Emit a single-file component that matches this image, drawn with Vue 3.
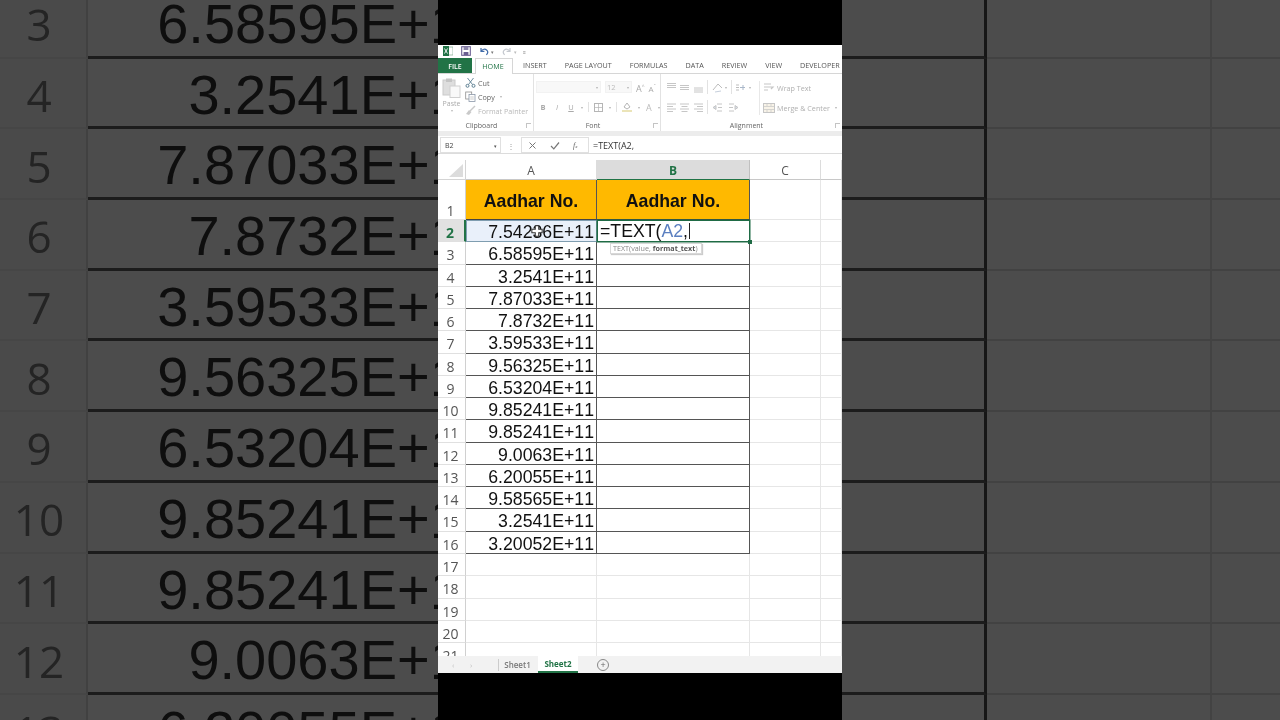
<script setup>
const bgRows = [
  ['3', '6.58595E+11'], ['4', '3.2541E+11'], ['5', '7.87033E+11'], ['6', '7.8732E+11'],
  ['7', '3.59533E+11'], ['8', '9.56325E+11'], ['9', '6.53204E+11'], ['10', '9.85241E+11'],
  ['11', '9.85241E+11'], ['12', '9.0063E+11'], ['13', '6.20055E+11']
]
const rightRows = Array.from({ length: 11 }, (_, i) => i)
const rows = [
  [3, '6.58595E+11'], [4, '3.2541E+11'], [5, '7.87033E+11'], [6, '7.8732E+11'], [7, '3.59533E+11'],
  [8, '9.56325E+11'], [9, '6.53204E+11'], [10, '9.85241E+11'], [11, '9.85241E+11'], [12, '9.0063E+11'],
  [13, '6.20055E+11'], [14, '9.58565E+11'], [15, '3.2541E+11'], [16, '3.20052E+11']
]
const empties = [17, 18, 19, 20, 21]
const tabs = ['INSERT', 'PAGE LAYOUT', 'FORMULAS', 'DATA', 'REVIEW', 'VIEW', 'DEVELOPER']
</script>

<template>
  <div class="screen">
    <div class="side left">
      <div class="bg-rows">
        <div v-for="r in bgRows" :key="r[0]" class="bg-row">
          <div class="bg-num">{{ r[0] }}</div>
          <div class="bg-val">{{ r[1] }}</div>
        </div>
      </div>
    </div>

    <div class="center">
      <div class="bar-black top"></div>
      <div class="app">
        <div class="titlebar">
          <svg class="t-ico" width="10" height="10" viewBox="0 0 10 10"><rect x="3" y="1" width="7" height="8" fill="#fff" stroke="#7fa98f" stroke-width=".7"/><rect x="0" y="0" width="6" height="10" fill="#217346"/><path d="M1.5 2.5l3 5M4.5 2.5l-3 5" stroke="#fff" stroke-width=".9"/></svg>
          <svg class="t-ico s" width="10" height="10" viewBox="0 0 10 10"><rect x=".7" y=".7" width="8.6" height="8.6" fill="none" stroke="#6a5f92" stroke-width="1.1"/><rect x="2.6" y="1" width="4.8" height="3" fill="#8a84a8"/><rect x="2.6" y="6" width="4.8" height="3.2" fill="#6a5f92"/></svg>
          <svg class="t-ico u" width="10" height="10" viewBox="0 0 10 10"><path d="M2 2v3.4h3.4M2.3 5.2C3.5 3 6 2.600 7.800 4.200 9.200 5.600 8.600 7.600 7.400 8.800" fill="none" stroke="#3f6aa8" stroke-width="1.200"/></svg>
          <span class="t-dd">▾</span>
          <svg class="t-ico r" width="10" height="10" viewBox="0 0 10 10"><path d="M8 2v3.400H4.600M7.700 5.200C6.500 3 4 2.600 2.200 4.200 .8 5.600 1.400 7.600 2.600 8.800" fill="none" stroke="#c5c9cf" stroke-width="1.200"/></svg>
          <span class="t-dd faint">▾</span>
          <span class="t-dd last">≡</span>
        </div>

        <div class="tabs">
          <div class="tab-file">FILE</div>
          <div class="tab-home">HOME</div>
          <div class="tab-list">
            <span v-for="t in tabs" :key="t" class="tab">{{ t }}</span>
          </div>
        </div>

        <div class="ribbon">
          <div class="group clip">
            <div class="group-body clip-body">
              <div class="paste">
                <svg width="19" height="20" viewBox="0 0 19 20"><rect x="1" y="2" width="12" height="15" fill="#dedede" stroke="#cacaca"/><rect x="4" y=".5" width="6" height="3.500" fill="#c4c4c4"/><rect x="8" y="8" width="10" height="11.500" fill="#f9f9f9" stroke="#d0d0d0"/></svg>
                <span class="paste-l">Paste</span>
                <span class="paste-d">▾</span>
              </div>
              <div class="clip-items">
                <div class="clip-item dark">
                  <svg width="11" height="11" viewBox="0 0 11 11"><path d="M2.500 1l5 6.500M8.500 1l-5 6.500" stroke="#5c7f92" stroke-width=".9"/><circle cx="2.500" cy="8.800" r="1.500" fill="none" stroke="#5c7f92"/><circle cx="8.500" cy="8.800" r="1.500" fill="none" stroke="#5c7f92"/></svg>
                  <span>Cut</span>
                </div>
                <div class="clip-item dark">
                  <svg width="11" height="11" viewBox="0 0 11 11"><rect x=".7" y="1" width="6" height="7" fill="#fff" stroke="#8f8f8f" stroke-width=".8"/><rect x="4" y="3.500" width="6" height="7" fill="#fff" stroke="#8a97a8" stroke-width=".8"/><path d="M5.200 6h3.600M5.200 8h3.600" stroke="#aaa" stroke-width=".6"/></svg>
                  <span>Copy</span>
                  <span class="mini">▾</span>
                </div>
                <div class="clip-item">
                  <svg width="11" height="11" viewBox="0 0 11 11"><path d="M10 1L5 6" stroke="#c9c9c9" stroke-width="1.500"/><path d="M1 9l3-4 2.500 2L4 10z" fill="#c9c9c9"/></svg>
                  <span>Format Painter</span>
                </div>
              </div>
            </div>
            <div class="group-label pad">Clipboard<i class="launch"></i></div>
          </div>

          <div class="group font">
            <div class="group-body font-body">
              <div class="font-row">
                <div class="fbox name"><span class="mini">▾</span></div>
                <div class="fbox size"><span>12</span><span class="mini">▾</span></div>
                <span class="ga big">A<sup>^</sup></span>
                <span class="ga small">A<sup>ˇ</sup></span>
              </div>
              <div class="font-row r2">
                <b class="fb">B</b><i class="fb">I</i><u class="fb">U</u><span class="mini">▾</span>
                <i class="vsep"></i>
                <svg width="9" height="9" viewBox="0 0 9 9"><rect x=".5" y=".5" width="8" height="8" fill="none" stroke="#b5b5b5"/><path d="M4.500 0v9M0 4.500h9" stroke="#b5b5b5" stroke-width=".7"/></svg>
                <span class="mini">▾</span>
                <i class="vsep"></i>
                <svg width="10" height="10" viewBox="0 0 10 10"><path d="M2 5l3-4 3 4-3 2z" fill="none" stroke="#b5b5b5"/><rect y="8" width="10" height="2" fill="#ebe4b8"/></svg>
                <span class="mini">▾</span>
                <span class="fa">A</span>
                <span class="mini">▾</span>
              </div>
            </div>
            <div class="group-label pad">Font<i class="launch"></i></div>
          </div>

          <div class="group align">
            <div class="group-body align-body">
              <div class="align-left">
                <div class="a-row">
                  <svg width="11" height="11" viewBox="0 0 11 11"><path d="M1 1.500h9M1 3.500h9M1 5.500h9" stroke="#c6c6c6"/></svg>
                  <svg width="11" height="11" viewBox="0 0 11 11"><path d="M1 3.500h9M1 5.500h9M1 7.500h9" stroke="#c6c6c6"/></svg>
                  <svg width="11" height="11" viewBox="0 0 11 11"><path d="M1 6h9M1 8h9M1 10h9" stroke="#c6c6c6"/></svg>
                  <i class="vsep tall"></i>
                  <svg width="11" height="11" viewBox="0 0 11 11"><path d="M1 8l5-6 4 4" fill="none" stroke="#bdbdbd"/><path d="M3 10l6-1" stroke="#c6cfdc"/></svg>
                  <span class="mini tight">▾</span>
                  <i class="vsep tall"></i>
                  <svg width="11" height="11" viewBox="0 0 11 11"><path d="M1 3h3M1 5.500h3M1 8h3" stroke="#bdbdbd"/><path d="M5 5.500h5M8 3v5" stroke="#a9b7c9"/></svg>
                  <span class="mini tight">▾</span>
                </div>
                <div class="a-row">
                  <svg width="11" height="11" viewBox="0 0 11 11"><path d="M1 2h9M1 4.500h6M1 7h9M1 9.500h6" stroke="#c6c6c6"/></svg>
                  <svg width="11" height="11" viewBox="0 0 11 11"><path d="M1 2h9M2.500 4.500h6M1 7h9M2.500 9.500h6" stroke="#c6c6c6"/></svg>
                  <svg width="11" height="11" viewBox="0 0 11 11"><path d="M1 2h9M4 4.500h6M1 7h9M4 9.500h6" stroke="#c6c6c6"/></svg>
                  <i class="vsep tall"></i>
                  <svg width="11" height="11" viewBox="0 0 11 11"><path d="M5 2h5M5 9h5M6 5.500h4M1 5.500l3-2v4z" stroke="#c6c6c6" fill="#d6dde6"/></svg>
                  <svg class="wide" width="11" height="11" viewBox="0 0 11 11"><path d="M1 2h5M1 9h5M1 5.500h4M10 5.500l-3-2v4z" stroke="#c6c6c6" fill="#d6dde6"/></svg>
                </div>
              </div>
              <div class="align-right">
                <div class="wrap">
                  <svg width="12" height="12" viewBox="0 0 12 12"><path d="M1 2h7M1 5h9l-2 2M1 8h4" fill="none" stroke="#c6c6c6" stroke-width="1.200"/></svg>
                  <span>Wrap Text</span>
                </div>
                <div class="wrap">
                  <svg width="12" height="12" viewBox="0 0 12 12"><rect x=".5" y="1.500" width="11" height="9" fill="#f8f3e8" stroke="#c6c6c6"/><path d="M0 4.500h12M0 7.500h12M4 1v3M8 1v3M4 8v3M8 8v3" stroke="#c6c6c6" stroke-width=".7"/></svg>
                  <span>Merge &amp; Center</span>
                  <span class="mini">▾</span>
                </div>
              </div>
            </div>
            <div class="group-label pad-lg">Alignment<i class="launch"></i></div>
          </div>
        </div>

        <div class="formula">
          <div class="namebox"><span>B2</span><span class="mini dark-m">▾</span></div>
          <span class="dots">⋮</span>
          <div class="fx-box">
            <svg width="9" height="9" viewBox="0 0 9 9"><path d="M1.500 1.500l6 6M7.500 1.500l-6 6" stroke="#777" stroke-width="1"/></svg>
            <svg width="10" height="9" viewBox="0 0 10 9"><path d="M1 5l2.800 2.800L9 1.500" fill="none" stroke="#777" stroke-width="1.200"/></svg>
            <span class="fx"><i>f</i><small>x</small></span>
          </div>
          <div class="f-input">=TEXT(A2,</div>
        </div>

        <div class="sheet">
          <div class="grid-row col-head">
            <div class="corner"><i></i></div>
            <div class="ch">A</div>
            <div class="ch sel">B</div>
            <div class="ch">C</div>
            <div class="ch"></div>
          </div>
          <div class="grid-row first">
            <div class="rh bottom">1</div>
            <div class="cell head">Aadhar No.</div>
            <div class="cell head">Aadhar No.</div>
            <div class="cell"></div>
            <div class="cell"></div>
          </div>
          <div class="grid-row data">
            <div class="rh selected">2</div>
            <div class="cell t a2">7.54236E+11</div>
            <div class="cell t b2">=TEXT(<span class="ref">A2</span>,<i class="caret"></i></div>
            <div class="cell"></div>
            <div class="cell"></div>
          </div>
          <div v-for="r in rows" :key="r[0]" class="grid-row data">
            <div class="rh">{{ r[0] }}</div>
            <div class="cell t a">{{ r[1] }}</div>
            <div class="cell t b"></div>
            <div class="cell"></div>
            <div class="cell"></div>
          </div>
          <div v-for="e in empties" :key="e" class="grid-row data">
            <div class="rh">{{ e }}</div>
            <div class="cell"></div>
            <div class="cell"></div>
            <div class="cell"></div>
            <div class="cell"></div>
          </div>

          <div class="tip">TEXT(value, <b>format_text</b>)</div>
          <svg class="cursor" width="12" height="12" viewBox="0 0 14 14"><path d="M5 1h4v4h4v4H9v4H5V9H1V5h4z" fill="#fff" stroke="#333" stroke-width="1.200"/></svg>
        </div>

        <div class="sheetbar">
          <span class="arrow">‹</span>
          <span class="arrow">›</span>
          <i class="vsep sb"></i>
          <span class="s-tab first-tab">Sheet1</span>
          <span class="s-tab on">Sheet2</span>
          <span class="plus">+</span>
        </div>
      </div>
      <div class="bar-black bottom"></div>
    </div>

    <div class="side right">
      <div class="bg-rows">
        <div v-for="r in rightRows" :key="r" class="r-row">
          <div class="r-a"></div>
          <div class="r-b"></div>
          <div class="r-c"></div>
        </div>
      </div>
    </div>
  </div>
</template>

<style>
html, body { margin: 0; background: #000; }
</style>

<style scoped>
* { box-sizing: border-box; }
.screen {
  width: 1280px; height: 720px; display: flex; overflow: hidden;
  font-family: "Liberation Sans", Arial, sans-serif; background: #000;
}
.side { width: 438px; height: 720px; overflow: hidden; background: #4c4c4c; flex: none; }
.bg-rows { margin-top: -12px; filter: blur(.7px); }
.bg-row { height: 70.7px; display: flex; }
.bg-num {
  width: 88px; flex: none; background: #4a4a4a; border-right: 2px solid #414141;
  color: #242424; font: 44px "Open Sans", sans-serif; display: flex; align-items: center;
  justify-content: center; padding: 4px 8px 0 0; border-bottom: 2px solid #464646;
}
.bg-val {
  flex: none; width: 406px; text-align: right; font-size: 56px; line-height: 72px; color: #0e0e0e;
  border-bottom: 3px solid #1c1c1c; padding-right: 2px; white-space: nowrap; font-kerning: none;
}
.r-row { height: 70.7px; display: flex; }
.r-a { width: 145px; flex: none; border-bottom: 3px solid #1c1c1c; border-right: 3px solid #161616; }
.r-b { width: 225px; flex: none; border-bottom: 2px solid #424242; border-right: 2px solid #434343; }
.r-c { flex: 1; border-bottom: 2px solid #424242; }

.center { width: 404px; flex: none; display: flex; flex-direction: column; }
.bar-black.top { height: 45px; background: #000; flex: none; }
.bar-black.bottom { height: 47px; background: #000; flex: none; }
.app {
  height: 628px; flex: none; background: #fff; display: flex; flex-direction: column; overflow: hidden;
  font-family: "Open Sans", sans-serif; color: #666; filter: blur(.25px);
}

.titlebar { height: 13px; display: flex; align-items: center; flex: none; padding-left: 5px; position: relative; }
.t-ico { flex: none; margin-top: -2px; }
.t-ico.s { margin-left: 8px; }
.t-ico.u { margin-left: 8px; }
.t-ico.r { margin-left: 8px; }
.t-dd { font-size: 5px; color: #777; margin-left: 2px; }
.t-dd.faint { color: #bbb; }
.t-dd.last { margin-left: 6px; color: #888; }

.tabs { height: 15px; display: flex; flex: none; position: relative; }
.tab-file {
  width: 34px; background: #217346; color: #fff; font-size: 7px; font-weight: 600; padding-top: 1px;
  display: flex; align-items: center; justify-content: center;
}
.tab-home {
  width: 38px; margin-left: 3px; border: 1px solid #d6d6d6; border-bottom: none; background: #fff;
  color: #217346; font-size: 7.2px; display: flex; align-items: center; justify-content: center;
  position: relative; z-index: 1; height: 16px; padding: 0 2px 1px 0;
}
.tab-list { display: flex; gap: 18px; padding: 0 0 1px 10px; align-items: center; white-space: nowrap; }
.tab { font-size: 7.2px; color: #555; }

.ribbon {
  height: 58px; flex: none; border-top: 1px solid #d6d6d6; display: flex; background: #fff; position: relative;
}
.group { border-right: 1px solid #e2e2e2; display: flex; flex-direction: column; flex: none; }
.group.clip { width: 96px; }
.group.font { width: 127px; }
.group.align { width: 181px; border-right: none; }
.group-body { flex: 1; min-height: 0; }
.group-label {
  height: 11px; flex: none; font-size: 7px; color: #666; text-align: center; line-height: 12px; position: relative;
}
.group-label.pad { padding-right: 8px; }
.group-label.pad-lg { padding-right: 10px; }
.launch {
  position: absolute; right: 2px; top: 3px; width: 5px; height: 5px;
  border-left: 1px solid #c4c4c4; border-top: 1px solid #c4c4c4;
}
.clip-body { display: flex; }
.paste { width: 27px; display: flex; flex-direction: column; align-items: center; padding-top: 4px; flex: none; }
.paste-l { font-size: 7px; color: #aaa; line-height: 9px; margin-top: 1px; }
.paste-d { font-size: 4px; color: #bbb; line-height: 6px; }
.clip-items { display: flex; flex-direction: column; padding-top: 3px; gap: 3px; }
.clip-item { display: flex; align-items: center; gap: 2px; height: 11px; font-size: 7.2px; color: #b8b8b8; white-space: nowrap; }
.clip-item.dark { color: #666; }
.mini { font-size: 4px; color: #b5b5b5; margin-left: 3px; }
.mini.tight { margin-left: 0; }
.font-body { padding: 7px 0 0 2px; display: flex; flex-direction: column; gap: 8px; }
.font-row { display: flex; align-items: center; gap: 4px; height: 12px; }
.font-row.r2 { gap: 3px; color: #aaa; }
.fbox {
  height: 12px; background: #f8f8f8; border: 1px solid #f2f2f2; display: flex; align-items: center;
  justify-content: flex-end; font-size: 7.5px; color: #bbb; padding-right: 2px;
}
.fbox.name { width: 65px; }
.fbox.size { width: 27px; justify-content: space-between; padding-left: 1px; }
.ga { font-size: 9px; color: #aaa; line-height: 12px; }
.ga sup { font-size: 5px; }
.ga.small { font-size: 8px; }
.fb { font-size: 7.5px; width: 14px; text-align: center; color: #aaa; font-style: normal; margin-right: -3px; }
i.fb { font-style: italic; }
.vsep { display: block; width: 1px; height: 10px; background: #e2e2e2; margin: 0 2px; flex: none; }
.vsep.tall { height: 14px; margin: 0 1px; }
.fa { font-size: 9px; color: #bbb; margin-left: 3px; }
.align-body { display: flex; padding: 7px 0 0 4.5px; }
.align-left { width: 94.5px; flex: none; display: flex; flex-direction: column; gap: 8px; border-right: 1px solid #e8e8e8; margin-bottom: 5px; }
.a-row { display: flex; gap: 2.5px; align-items: center; height: 12px; }
.a-row .wide { margin-left: 3px; }
.align-right { padding-left: 3px; display: flex; flex-direction: column; gap: 7px; }
.wrap { display: flex; align-items: center; gap: 2px; font-size: 7.2px; color: #b0b0b0; white-space: nowrap; height: 13px; }

.formula {
  height: 23px; flex: none; display: flex; align-items: center; padding: 1px 0 0 2px; background: #fff;
  border-top: 5px solid #ececec; border-bottom: 1px solid #dcdcdc;
}
.namebox {
  width: 61px; height: 100%; border: 1px solid #e0e0e0; display: flex; justify-content: space-between;
  align-items: center; padding: 1px 3px 0 4px; font-size: 7px; color: #444; flex: none;
}
.dark-m { color: #555; font-size: 5px; }
.dots { width: 20px; text-align: center; font-size: 8px; color: #999; flex: none; }
.fx-box {
  width: 68px; height: 100%; border: 1px solid #e0e0e0; display: flex; align-items: center; gap: 13px; padding-left: 6px; flex: none;
}
.fx { font: italic 8px "Liberation Serif", serif; color: #666; }
.fx small { font-size: 5px; }
.f-input { flex: 1; height: 100%; padding-left: 4px; font-size: 9px; color: #333; line-height: 17px; }

.sheet { flex: none; height: 502px; position: relative; overflow: hidden; padding-top: 6px; }
.grid-row { display: grid; grid-template-columns: 28px 131px 153px 71px 21px; grid-template-rows: minmax(0, 1fr); }
.col-head { height: 20px; }
.first { height: 40px; }
.data { height: 22.27px; }
.corner { background: #fff; border-bottom: 1px solid #d4d4d4; border-right: 1px solid #d4d4d4; position: relative; }
.corner i {
  position: absolute; right: 2px; bottom: 2px; width: 0; height: 0;
  border-left: 14px solid transparent; border-bottom: 13px solid #dcdcdc;
}
.ch {
  border-right: 1px solid #dcdcdc; border-bottom: 1px solid #c8c8c8; text-align: center;
  font-size: 12px; line-height: 21px; color: #555; background: #fff; font-family: "Open Sans", sans-serif;
}
.ch.sel { background: #dcdcdc; color: #217346; font-weight: 700; border-bottom: 1px solid #217346; border-right: 1px solid #c0c0c0; }
.rh {
  border-right: 1px solid #d0d0d0; border-bottom: 1px solid #e0e0e0; text-align: center; font-size: 14px;
  color: #555; line-height: 26px; padding-right: 2px; overflow: hidden;
}
.rh.bottom { line-height: 22px; padding-top: 20px; }
.rh.selected { background: #e1e1e1; color: #217346; font-weight: 700; border-right: 2px solid #217346; }
.cell { border-right: 1px solid #e6e6e6; border-bottom: 1px solid #e6e6e6; font-family: "Liberation Sans", Arial, sans-serif; min-width: 0; }
.head {
  background: #ffb900; border-right: 1px solid #555; border-bottom: 1px solid #444; color: #111; font-weight: 700; font-size: 17.7px;
  display: flex; align-items: center; justify-content: center; font-kerning: none; padding-top: 3px;
}
.t { color: #111; font-size: 17.7px; line-height: 24px; white-space: nowrap; font-kerning: none; }
.a, .a2 { text-align: right; padding-right: 2px; }
.a, .b { border-right: 1px solid #555; border-bottom: 1px solid #555; }
.a2 { background: #e9f0fa; border: 1px solid #7f9db0; border-right: 1px solid #7fa0b0; line-height: 22px; }
.b2 { padding-left: 2px; border: 1.5px solid #1f6b45; box-shadow: 0 0 0 .5px #1f6b45; line-height: 21px; position: relative; }
.b2::after { content: ""; position: absolute; right: -3px; bottom: -3px; width: 4px; height: 4px; background: #1f6b45; }
.ref { color: #5b7fc0; }
.caret { display: inline-block; width: 1px; height: 16px; background: #222; margin-left: 1px; vertical-align: -2px; }
.tip {
  position: absolute; left: 172px; top: 89px; width: 92px; height: 11px; background: #fff;
  border: 1px solid #d8d8d8; box-shadow: 1px 1px 1px #ccc; font-size: 7.2px; color: #888; line-height: 9px;
  padding-left: 2px; white-space: nowrap; font-family: "Open Sans", sans-serif;
}
.tip b { color: #555; font-weight: 700; }
.cursor { position: absolute; left: 93px; top: 71px; }

.sheetbar {
  height: 17px; flex: none; background: #f2f2f2; display: flex; align-items: center; padding-left: 14px;
  position: relative;
}
.arrow { color: #c4c4c4; font-size: 8px; width: 18px; }
.vsep.sb { height: 12px; margin: 0 1px 0 10px; background: #ccc; }
.s-tab { font-size: 8px; color: #777; width: 40px; text-align: center; font-weight: 600; line-height: 16px; }
.s-tab.first-tab { width: 38px; padding-right: 3px; }
.s-tab.on { background: #fff; color: #217346; font-weight: 700; border-bottom: 2px solid #217346; height: 17px; }
.plus {
  width: 12px; height: 12px; margin-left: 19px; border: 1px solid #888; border-radius: 50%;
  font-size: 9px; line-height: 9px; text-align: center; color: #666;
}
</style>
